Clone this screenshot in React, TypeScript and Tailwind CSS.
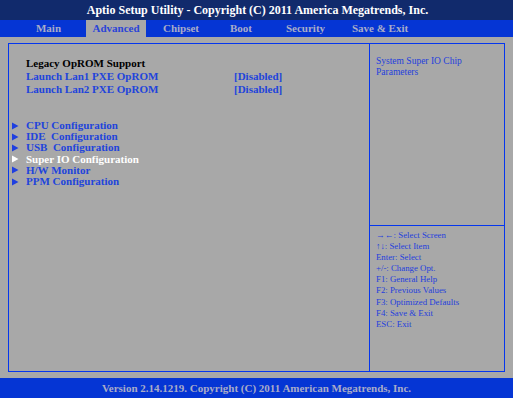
import React from "react";

const Tri = ({ white }: { white?: boolean }) => (
  <svg width="7" height="8" viewBox="0 0 7 8" className="shrink-0">
    <polygon points="0,0.5 6.5,4 0,7.5" fill={white ? "#ffffff" : "#1f3fe0"} />
  </svg>
);

export default function App() {
  const menu = [
    { t: "CPU Configuration" },
    { t: "IDE  Configuration" },
    { t: "USB  Configuration" },
    { t: "Super IO Configuration", w: true },
    { t: "H/W Monitor" },
    { t: "PPM Configuration" },
  ];
  const help = [
    "\u2192\u2190: Select Screen",
    "\u2191\u2193: Select Item",
    "Enter: Select",
    "+/-: Change Opt.",
    "F1: General Help",
    "F2: Previous Values",
    "F3: Optimized Defaults",
    "F4: Save & Exit",
    "ESC: Exit",
  ];
  return (
    <div
      className="w-[513px] h-[398px] flex flex-col bg-[#a8a8a8] overflow-hidden"
      style={{ fontFamily: '"Liberation Serif", "Times New Roman", serif' }}
    >
      <div className="h-[20px] bg-[#112a6c] flex items-center justify-center text-white font-bold text-[12px] leading-[20px] pl-[2px]">
        Aptio Setup Utility - Copyright (C) 2011 America Megatrends, Inc.
      </div>
      <div className="h-[17px] bg-[#0535d4] flex items-stretch text-[11px] font-bold leading-[17px] text-[#a9acc8]">
        <div className="ml-[18px] w-[61px] text-center">Main</div>
        <div className="ml-[7px] w-[60px] text-center bg-[#a8a8a8] text-[#2a44d8]">Advanced</div>
        <div className="w-[70px] text-center">Chipset</div>
        <div className="w-[50px] text-center">Boot</div>
        <div className="w-[79px] text-center">Security</div>
        <div className="w-[70px] text-center">Save &amp; Exit</div>
      </div>
      <div className="flex-1 px-[8px] pt-[6px] pb-[6px] flex">
        <div className="flex-1 flex border border-[#0536ee]">
          <div className="w-[361px] border-r border-[#0536ee] pt-[13px] text-[11px] font-bold">
            <div className="leading-[13px] pl-[17px] text-black">Legacy OpROM Support</div>
            <div className="leading-[13px] pl-[17px] text-[#2144dc] flex">
              <span className="w-[208px]">Launch Lan1 PXE OpROM</span>
              <span>[Disabled]</span>
            </div>
            <div className="leading-[13px] pl-[17px] text-[#2144dc] flex">
              <span className="w-[208px]">Launch Lan2 PXE OpROM</span>
              <span>[Disabled]</span>
            </div>
            <div className="mt-[24px] flex flex-col">
              {menu.map((m) => (
                <div
                  key={m.t}
                  className={`h-[11.2px] leading-[11.2px] flex items-center pl-[3px] gap-[7px] whitespace-pre ${
                    m.w ? "text-white" : "text-[#2144dc]"
                  }`}
                >
                  <Tri white={m.w} />
                  <span>{m.t}</span>
                </div>
              ))}
            </div>
          </div>
          <div className="flex-1 flex flex-col">
            <div className="h-[182px] border-b border-[#0536ee] pt-[12px] pl-[6px] text-[9.5px] leading-[11px] text-[#1f40de]">
              <div>System Super IO Chip</div>
              <div>Parameters</div>
            </div>
            <div className="flex-1 pt-[4px] pl-[6px] text-[8.8px] leading-[11.1px] text-[#1f40de]">
              {help.map((h) => (
                <div key={h}>{h}</div>
              ))}
            </div>
          </div>
        </div>
      </div>
      <div className="h-[20px] bg-[#0535d4] flex items-center justify-center text-[11px] font-bold text-[#a9acc8] leading-[20px]">
        Version 2.14.1219. Copyright (C) 2011 American Megatrends, Inc.
      </div>
    </div>
  );
}
